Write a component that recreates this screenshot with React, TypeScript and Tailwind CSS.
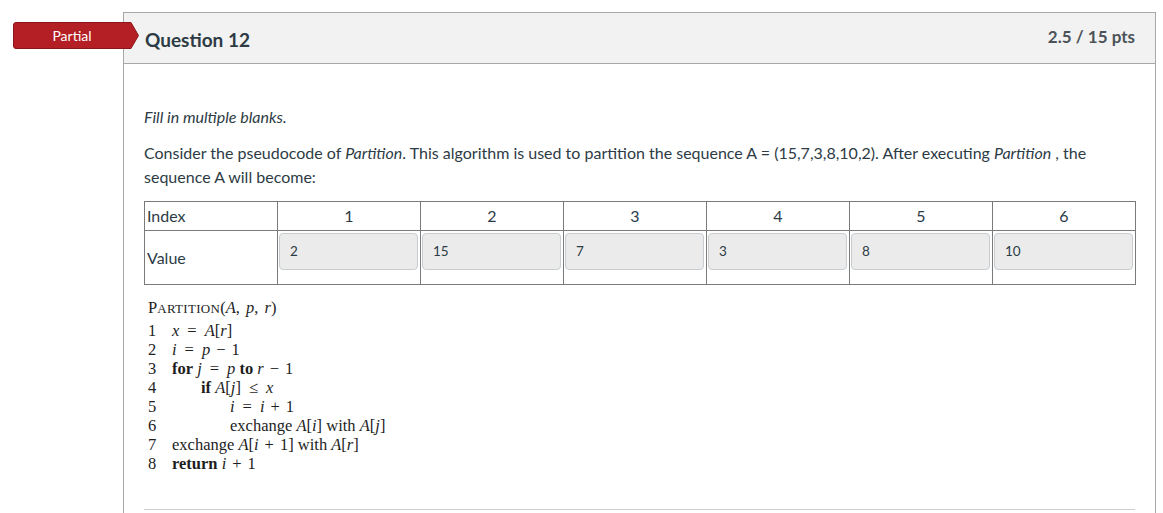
import React from 'react';

const values = ['2', '15', '7', '3', '8', '10'];

const lato = { fontFamily: 'Lato, "Open Sans", sans-serif' };

const CodeLine: React.FC<{ n: number; indent?: number; children: React.ReactNode }> = ({ n, indent = 0, children }) => {
  const pad = indent === 0 ? 'pl-[24px]' : indent === 1 ? 'pl-[53px]' : 'pl-[82px]';
  return (
    <div className="relative h-[19px] leading-[19px] whitespace-nowrap">
      <span className="absolute left-0 top-0">{n}</span>
      <div className={pad}>{children}</div>
    </div>
  );
};

const V: React.FC<{ children: React.ReactNode }> = ({ children }) => <i>{children}</i>;
const K: React.FC<{ children: React.ReactNode }> = ({ children }) => <b>{children}</b>;
// relation / binary operator with TeX-like spacing
const Eq: React.FC<{ c?: string }> = ({ c = '=' }) => <span className="mx-[8px]">{c}</span>;
const Op: React.FC<{ c: string }> = ({ c }) => <span className="mx-[6px]">{c}</span>;

const App: React.FC = () => {
  return (
    <div className="w-[1163px] h-[513px] overflow-hidden bg-white" style={lato}>
      <div className="relative ml-[123px] mt-[12px] w-[1033px] h-[520px] border border-b-0 border-[#a8a8a8]">
        {/* status tag */}
        <div className="absolute left-[-111px] top-[9px] w-[126px] h-[27px] flex items-center">
          <svg className="absolute inset-0" width="126" height="27" viewBox="0 0 126 27">
            <path d="M3 0.5 H118 L125.5 13.5 L118 26.5 H3 Q0.5 26.5 0.5 24 V3 Q0.5 0.5 3 0.5 Z" fill="#b41f25" stroke="#8c171b" />
          </svg>
          <span className="relative w-[118px] text-center text-white text-[14px] leading-none">Partial</span>
        </div>

        {/* header */}
        <div className="h-[51px] bg-[#f2f2f2] border-b border-[#a8a8a8] flex items-center justify-between pl-[21px] pr-[20px]">
          <h2 className="text-[19px] font-bold text-[#2d3b45] pt-[4px]">Question 12</h2>
          <div className="text-[17px] font-bold text-[#4b5258] pb-[2px]">2.5 / 15 pts</div>
        </div>

        {/* body */}
        <div className="px-[20px] pt-[41px] text-[16px] leading-[24px] text-[#2d3b45]">
          <p className="italic">Fill in multiple blanks.</p>
          <p className="mt-[12px]">
            Consider the pseudocode of <i>Partition</i>. This algorithm is used to partition the sequence A = (15,7,3,8,10,2). After executing <i>Partition</i> , the sequence A will become:
          </p>

          <table className="mt-[12px] w-[992px] border-collapse table-fixed text-[16px] leading-normal">
            <colgroup>
              <col className="w-[133px]" />
              <col />
              <col />
              <col />
              <col />
              <col />
              <col />
            </colgroup>
            <tbody>
              <tr className="h-[29px]">
                <td className="border border-[#7a7a7a] pl-[2px] align-middle">Index</td>
                {[1, 2, 3, 4, 5, 6].map((i) => (
                  <td key={i} className="border border-[#7a7a7a] text-center align-middle">{i}</td>
                ))}
              </tr>
              <tr className="h-[54px]">
                <td className="border border-[#7a7a7a] pl-[2px] align-middle">Value</td>
                {values.map((v, i) => (
                  <td key={i} className="border border-[#7a7a7a] align-top pl-[1px] pr-[2px] pt-[2px]">
                    <div className="h-[37px] rounded-[4px] border border-[#c7cdd1] bg-[#ebebeb] flex items-center pl-[10px] text-[13.5px] text-[#2d3b45]">
                      {v}
                    </div>
                  </td>
                ))}
              </tr>
            </tbody>
          </table>

          <div className="mt-[13px] pl-[4px] text-[16.5px] text-[#1e1e1e]" style={{ fontFamily: '"Liberation Serif", "Times New Roman", serif' }}>
            <div className="h-[23px] leading-[20px] whitespace-nowrap">
              <span>P</span>
              <span className="text-[13px] tracking-[0.3px]">ARTITION</span>(<V>A</V>,<span className="mx-[1px]" /> <V>p</V>,<span className="mx-[1px]" /> <V>r</V>)
            </div>
            <CodeLine n={1}><V>x</V><Eq /><V>A</V>[<V>r</V>]</CodeLine>
            <CodeLine n={2}><V>i</V><Eq /><V>p</V><Op c="−" />1</CodeLine>
            <CodeLine n={3}><K>for</K> <V>j</V><Eq /><V>p</V> <K>to</K> <V>r</V><Op c="−" />1</CodeLine>
            <CodeLine n={4} indent={1}><K>if</K> <V>A</V>[<V>j</V>]<Eq c="≤" /><V>x</V></CodeLine>
            <CodeLine n={5} indent={2}><V>i</V><Eq /><V>i</V><Op c="+" />1</CodeLine>
            <CodeLine n={6} indent={2}>exchange <V>A</V>[<V>i</V>] with <V>A</V>[<V>j</V>]</CodeLine>
            <CodeLine n={7}>exchange <V>A</V>[<V>i</V><Op c="+" />1] with <V>A</V>[<V>r</V>]</CodeLine>
            <CodeLine n={8}><K>return</K> <V>i</V><Op c="+" />1</CodeLine>
          </div>

          <div className="mt-[36px] w-[991px] border-t border-[#cfcfcf]" />
        </div>
      </div>
    </div>
  );
};

export default App;
